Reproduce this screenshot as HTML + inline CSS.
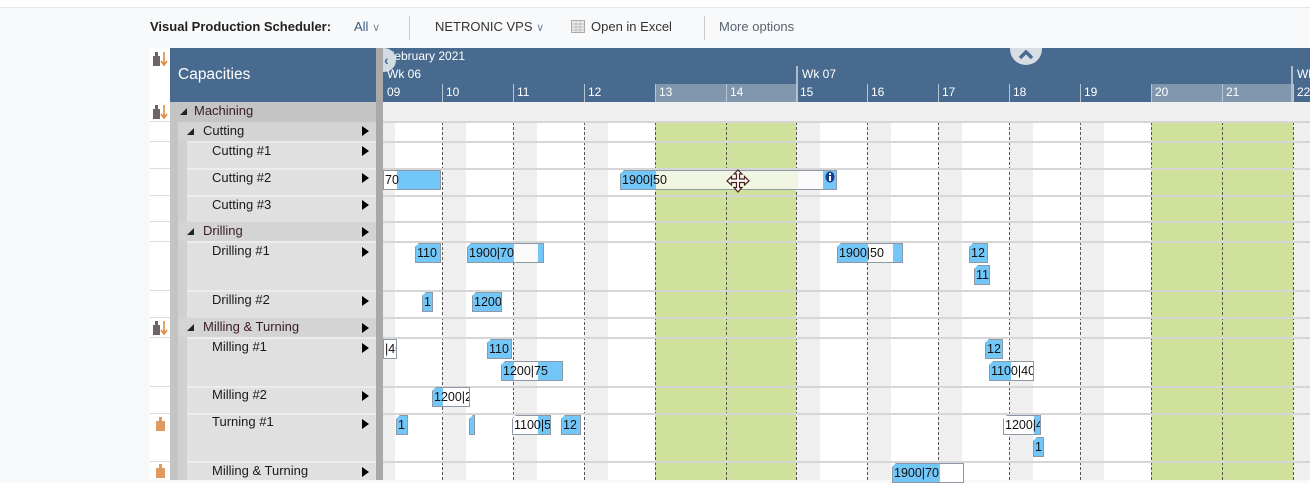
<!DOCTYPE html>
<html><head><meta charset="utf-8">
<style>
*{margin:0;padding:0;box-sizing:border-box}
body{width:1310px;height:480px;overflow:hidden;background:#f8f9fa;font-family:"Segoe UI","Liberation Sans",sans-serif;position:relative}
.a{position:absolute}
.tb{font-size:13px;color:#212121;top:19px;white-space:nowrap}
.hd{color:#fff;font-size:12px;white-space:nowrap}
.tr{position:absolute;font-size:13px;color:#1a1a1a;white-space:nowrap}
.tri{position:absolute;width:0;height:0;border-top:5px solid transparent;border-bottom:5px solid transparent;border-left:7px solid #000}
.exp{position:absolute;width:0;height:0;border-left:7px solid transparent;border-bottom:7px solid #222}
.bar{position:absolute;height:20px;border:1px solid #8c99a5;font-size:12.5px;line-height:18px;color:#111;overflow:hidden;white-space:nowrap;padding-left:1px;clip-path:polygon(4px 0,100% 0,100% 100%,0 100%,0 4px);background:#73c6f8}
</style></head><body>
<div class="a" style="left:0;top:0;width:1310px;height:7px;background:#fff"></div>
<div class="a" style="left:0;top:7px;width:1310px;height:1px;background:#e6e6e6"></div>
<div class="a tb" style="left:150px;font-weight:bold">Visual Production Scheduler:</div>
<div class="a tb" style="left:354px;color:#3a5a80">All <span style="color:#889;font-size:11px">&#8744;</span></div>
<div class="a" style="left:409px;top:16px;width:1px;height:24px;background:#ccc"></div>
<div class="a tb" style="left:435px;color:#333">NETRONIC VPS <span style="color:#68a;font-size:11px">&#8744;</span></div>
<svg class="a" style="left:571px;top:20px" width="14" height="13"><rect x="0.5" y="0.5" width="13" height="12" fill="#eee" stroke="#aaa"/><path d="M5 1v11M9 1v11M1 4h12M1 7h12M1 10h12" stroke="#bbb"/></svg>
<div class="a tb" style="left:591px;color:#333">Open in Excel</div>
<div class="a" style="left:704px;top:16px;width:1px;height:24px;background:#ccc"></div>
<div class="a tb" style="left:719px;color:#5a6470">More options</div>

<div class="a" style="left:150px;top:48px;width:20px;height:432px;background:#fff"></div>
<div class="a" style="left:170px;top:48px;width:1140px;height:54px;background:#476a8e"></div>
<div class="a" style="left:178px;top:66px;color:#fff;font-size:15.5px">Capacities</div>
<div class="a" style="left:376px;top:48px;width:7px;height:432px;background:#a9a9a9"></div>
<div class="a" style="left:655px;top:84px;width:142px;height:18px;background:#8197ad"></div>
<div class="a" style="left:1151px;top:84px;width:141px;height:18px;background:#8197ad"></div>
<div class="a hd" style="left:387px;top:49px">February 2021</div>
<div class="a" style="left:383px;top:48px;width:13px;height:24px;background:#d2dae2;border-radius:0 12px 12px 0"></div>
<div class="a" style="left:384px;top:52px;font-size:14px;color:#476a8e;font-weight:bold">&#8249;</div>
<div class="a hd" style="left:387px;top:67px">Wk 06</div>
<div class="a hd" style="left:802px;top:67px">Wk 07</div>
<div class="a hd" style="left:1297px;top:67px">Wk</div>
<div class="a" style="left:796px;top:66px;width:2px;height:36px;background:#aebccb"></div>
<div class="a" style="left:1291px;top:66px;width:2px;height:36px;background:#aebccb"></div>
<div class="a" style="left:1010px;top:48px;width:32px;height:17px;background:#d8dde3;border-radius:0 0 16px 16px"></div>
<svg class="a" style="left:1018px;top:50px" width="16" height="10"><path d="M2 8L8 2L14 8" stroke="#476a8e" stroke-width="3.5" fill="none"/></svg>
<div id="days"></div>

<div class="a" style="left:383px;top:102px;width:927px;height:378px;background:#fff"></div>
<div id="grid"></div>
<div class="a" style="left:383px;top:102px;width:927px;height:19px;background:#f0f0f0"></div>

<div class="a" style="left:170px;top:102px;width:206px;height:378px;background:#c4c4c4"></div>
<div class="a" style="left:178px;top:122px;width:198px;height:100px;background:#d0d0d0"></div>
<div class="a" style="left:178px;top:222px;width:198px;height:96px;background:#d0d0d0"></div>
<div class="a" style="left:178px;top:318px;width:198px;height:162px;background:#d0d0d0"></div>
<div class="a" style="left:187px;top:142px;width:189px;height:80px;background:#e0e0e0"></div>
<div class="a" style="left:187px;top:241px;width:189px;height:77px;background:#e0e0e0"></div>
<div class="a" style="left:187px;top:337px;width:189px;height:143px;background:#e0e0e0"></div>
<div class="a" style="left:178px;top:122px;width:198px;height:19px;background:#d4d4d4"></div>
<div class="a" style="left:178px;top:222px;width:198px;height:19px;background:#d4d4d4"></div>
<div class="a" style="left:178px;top:318px;width:198px;height:19px;background:#d4d4d4"></div>

<div id="lines"></div>

<div class="exp" style="left:180px;top:108px"></div><div class="tr" style="left:194px;top:103px;color:#3a1a2a">Machining</div>
<div class="exp" style="left:187px;top:128px"></div><div class="tr" style="left:203px;top:123px">Cutting</div><div class="tri" style="left:362px;top:126px"></div>
<div class="tr" style="left:212px;top:143px">Cutting #1</div><div class="tri" style="left:362px;top:146px"></div>
<div class="tr" style="left:212px;top:170px">Cutting #2</div><div class="tri" style="left:362px;top:173px"></div>
<div class="tr" style="left:212px;top:197px">Cutting #3</div><div class="tri" style="left:362px;top:200px"></div>
<div class="exp" style="left:187px;top:228px"></div><div class="tr" style="left:203px;top:223px;color:#3a1a2a">Drilling</div><div class="tri" style="left:362px;top:227px"></div>
<div class="tr" style="left:212px;top:243px">Drilling #1</div><div class="tri" style="left:362px;top:247px"></div>
<div class="tr" style="left:212px;top:292px">Drilling #2</div><div class="tri" style="left:362px;top:296px"></div>
<div class="exp" style="left:187px;top:324px"></div><div class="tr" style="left:203px;top:319px;color:#3a1a2a">Milling &amp; Turning</div><div class="tri" style="left:362px;top:323px"></div>
<div class="tr" style="left:212px;top:339px">Milling #1</div><div class="tri" style="left:362px;top:343px"></div>
<div class="tr" style="left:212px;top:387px">Milling #2</div><div class="tri" style="left:362px;top:391px"></div>
<div class="tr" style="left:212px;top:414px">Turning #1</div><div class="tri" style="left:362px;top:419px"></div>
<div class="tr" style="left:212px;top:463px">Milling &amp; Turning</div><div class="tri" style="left:362px;top:467px"></div>

<svg class="a" style="left:152px;top:51px" width="16" height="16"><rect x="1" y="5" width="7" height="10" fill="#6e6466"/><rect x="3" y="1" width="3" height="4" fill="#6e6466"/><path d="M12 1v12M9 10l3 4 3-4" stroke="#e08a3c" stroke-width="1.6" fill="none"/></svg>
<svg class="a" style="left:152px;top:104px" width="16" height="16"><rect x="1" y="5" width="7" height="10" fill="#6e6466"/><rect x="3" y="1" width="3" height="4" fill="#6e6466"/><path d="M12 1v12M9 10l3 4 3-4" stroke="#e08a3c" stroke-width="1.6" fill="none"/></svg>
<svg class="a" style="left:152px;top:320px" width="16" height="16"><rect x="1" y="5" width="7" height="10" fill="#6e6466"/><rect x="3" y="1" width="3" height="4" fill="#6e6466"/><path d="M12 1v12M9 10l3 4 3-4" stroke="#e08a3c" stroke-width="1.6" fill="none"/></svg>
<svg class="a" style="left:156px;top:416px" width="10" height="15"><rect x="0" y="5" width="9" height="10" fill="#e09a60"/><rect x="3" y="1" width="3" height="4" fill="#e09a60"/></svg>
<svg class="a" style="left:156px;top:463px" width="10" height="15"><rect x="0" y="5" width="9" height="10" fill="#e09a60"/><rect x="3" y="1" width="3" height="4" fill="#e09a60"/></svg>

<div class="bar" style="left:383px;top:170px;width:58px;background:linear-gradient(90deg,#fff 13px,#73c6f8 13px);clip-path:none">70</div>
<div class="bar" style="left:620px;top:170px;width:217px;background:linear-gradient(90deg,#73c6f8 35px,#f1f6e2 35px,#f1f6e2 177px,#fafafa 177px,#fafafa 202px,#73c6f8 202px)">1900|50</div>
<svg class="a" style="left:825px;top:171px" width="10" height="12"><ellipse cx="5" cy="6" rx="4.5" ry="5.5" fill="#1a3a8a"/><rect x="4" y="5" width="2" height="5" fill="#fff"/><rect x="4" y="2" width="2" height="2" fill="#fff"/></svg>
<svg class="a" style="left:726px;top:169px" width="24" height="24"><path d="M12 1l4 4h-2.5v5h5V7.5L23 12l-4.5 4v-2.5h-5v5H16L12 23l-4-4.5h2.5v-5h-5V16L1 12l4.5-4.5V10h5V5H8z" fill="#fff" stroke="#4a2020" stroke-width="1.2"/></svg>

<div class="bar" style="left:415px;top:243px;width:26px">110</div>
<div class="bar" style="left:467px;top:243px;width:77px;background:linear-gradient(90deg,#73c6f8 46px,#fafafa 46px,#fafafa 70px,#73c6f8 70px)">1900|70</div>
<div class="bar" style="left:837px;top:243px;width:66px;background:linear-gradient(90deg,#73c6f8 30px,#fafafa 30px,#fafafa 55px,#73c6f8 55px)">1900|50</div>
<div class="bar" style="left:969px;top:243px;width:19px">12</div>
<div class="bar" style="left:974px;top:265px;width:16px">11</div>

<div class="bar" style="left:422px;top:292px;width:11px">1</div>
<div class="bar" style="left:472px;top:292px;width:30px">1200</div>

<div class="bar" style="left:383px;top:339px;width:14px;background:#fff;clip-path:none">|40</div>
<div class="bar" style="left:487px;top:339px;width:25px">110</div>
<div class="bar" style="left:985px;top:339px;width:18px">12</div>
<div class="bar" style="left:501px;top:361px;width:62px;background:linear-gradient(90deg,#73c6f8 12px,#fafafa 12px,#fafafa 36px,#73c6f8 36px)">1200|75</div>
<div class="bar" style="left:989px;top:361px;width:45px;background:linear-gradient(90deg,#73c6f8 21px,#fff 21px)">1100|40</div>

<div class="bar" style="left:432px;top:387px;width:38px;background:linear-gradient(90deg,#73c6f8 10px,#fff 10px)">1200|2</div>

<div class="bar" style="left:396px;top:415px;width:12px">1</div>
<div class="bar" style="left:469px;top:415px;width:6px"></div>
<div class="bar" style="left:512px;top:415px;width:39px;background:linear-gradient(90deg,#fff 25px,#73c6f8 25px)">1100|5</div>
<div class="bar" style="left:561px;top:415px;width:20px">12</div>
<div class="bar" style="left:1003px;top:415px;width:38px;background:linear-gradient(90deg,#fff 30px,#73c6f8 30px)">1200|4</div>
<div class="bar" style="left:1033px;top:437px;width:11px">1</div>
<div class="bar" style="left:892px;top:463px;width:72px;background:linear-gradient(90deg,#73c6f8 47px,#fff 47px)">1900|70</div>

<script>
var W=70.9,X0=371,g='',d='',L='';
var names=['09','10','11','12','13','14','15','16','17','18','19','20','21','22'];
for(var i=0;i<14;i++){
 var x=Math.round(X0+i*W),we=(i==4||i==5||i==11||i==12);
 var x2=Math.round(X0+(i+1)*W);
 if(we){g+='<div class="a" style="left:'+x+'px;top:121px;width:'+(x2-x)+'px;height:359px;background:#d0e19b"></div>';}
 else{var s=Math.max(x,383);var e=x+24;if(e>s)g+='<div class="a" style="left:'+s+'px;top:121px;width:'+(e-s)+'px;height:359px;background:#efefef"></div>';}
 if(i>0){g+='<div class="a" style="left:'+x+'px;top:102px;height:378px;border-left:1px dashed #555"></div>';
 d+='<div class="a" style="left:'+x+'px;top:84px;width:1px;height:18px;background:#b8c5d3"></div>';}
 d+='<div class="a hd" style="left:'+(Math.max(x,383)+4)+'px;top:85px">'+names[i]+'</div>';
}
document.getElementById('grid').innerHTML=g;
document.getElementById('days').innerHTML=d;
[121,141,168,195,221,241,290,317,337,386,413,461].forEach(function(y){
 L+='<div class="a" style="left:150px;top:'+y+'px;width:20px;height:1px;background:#ddd"></div>';
 L+='<div class="a" style="left:383px;top:'+y+'px;width:927px;height:2px;background:#d6d6d6"></div>';
 if(y!=121&&y!=221&&y!=317)L+='<div class="a" style="left:187px;top:'+y+'px;width:189px;height:2px;background:#ececec"></div>';
});
document.getElementById('lines').innerHTML=L;
</script>
</body></html>
